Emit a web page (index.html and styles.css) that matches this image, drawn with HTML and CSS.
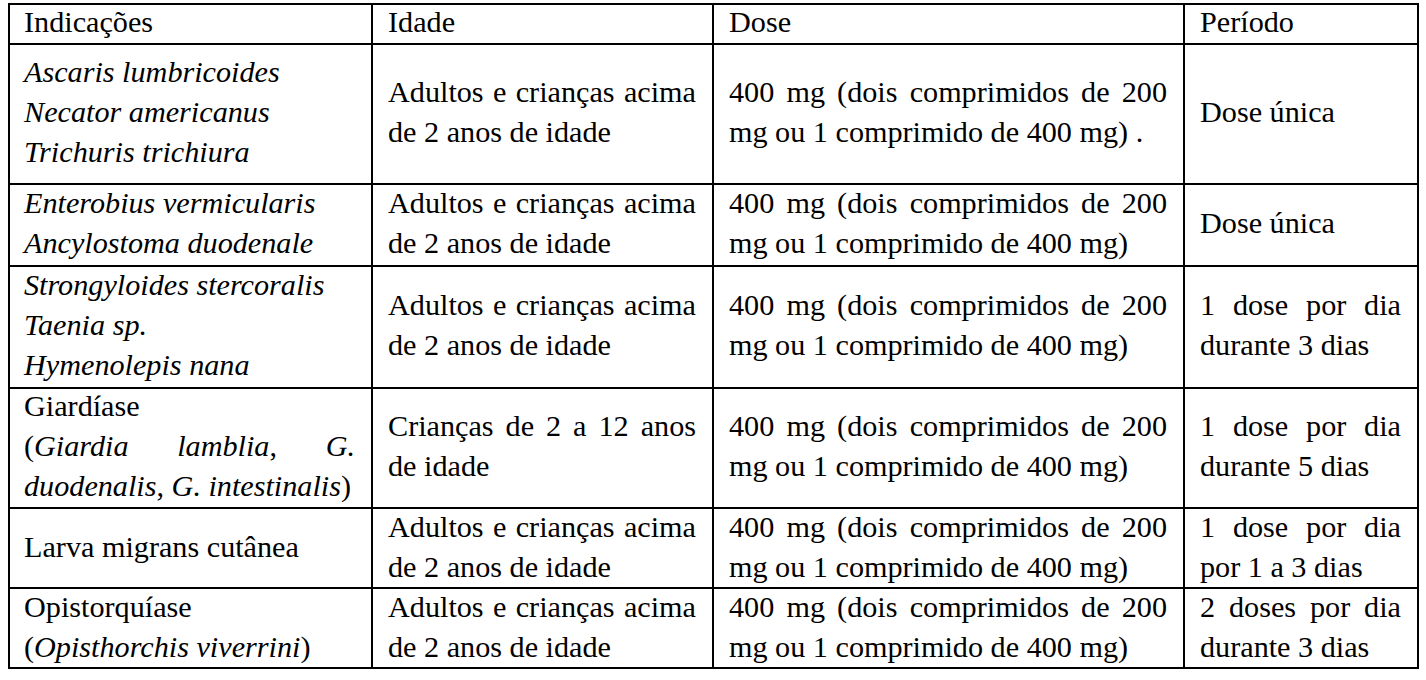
FILE: index.html
```html
<!DOCTYPE html>
<html lang="pt">
<head>
<meta charset="utf-8">
<title>Indicações</title>
<link rel="stylesheet" href="styles.css">
</head>
<body>
<table class="dosage">
  <colgroup>
    <col class="c-ind">
    <col class="c-age">
    <col class="c-dose">
    <col class="c-per">
  </colgroup>
  <tr class="r-head">
    <td><div class="t">Indicações</div></td>
    <td><div class="t">Idade</div></td>
    <td><div class="t">Dose</div></td>
    <td><div class="t">Período</div></td>
  </tr>
  <tr class="r-first">
    <td><div class="t"><i>Ascaris lumbricoides</i><br><i>Necator americanus</i><br><i>Trichuris trichiura</i></div></td>
    <td><div class="t">Adultos e crianças acima de 2 anos de idade</div></td>
    <td><div class="t">400 mg (dois comprimidos de 200 mg ou 1 comprimido de 400 mg) .</div></td>
    <td><div class="t">Dose única</div></td>
  </tr>
  <tr>
    <td><div class="t"><i>Enterobius vermicularis</i><br><i>Ancylostoma duodenale</i></div></td>
    <td><div class="t">Adultos e crianças acima de 2 anos de idade</div></td>
    <td><div class="t">400 mg (dois comprimidos de 200 mg ou 1 comprimido de 400 mg)</div></td>
    <td><div class="t">Dose única</div></td>
  </tr>
  <tr>
    <td><div class="t"><i>Strongyloides stercoralis</i><br><i>Taenia sp.</i><br><i>Hymenolepis nana</i></div></td>
    <td><div class="t">Adultos e crianças acima de 2 anos de idade</div></td>
    <td><div class="t">400 mg (dois comprimidos de 200 mg ou 1 comprimido de 400 mg)</div></td>
    <td><div class="t">1 dose por dia durante 3 dias</div></td>
  </tr>
  <tr class="r-tight">
    <td><div class="t"><div>Giardíase</div><div>(<i>Giardia lamblia</i>, <i>G. duodenalis</i>, <i>G. intestinalis</i>)</div></div></td>
    <td><div class="t">Crianças de 2 a 12 anos de idade</div></td>
    <td><div class="t">400 mg (dois comprimidos de 200 mg ou 1 comprimido de 400 mg)</div></td>
    <td><div class="t">1 dose por dia durante 5 dias</div></td>
  </tr>
  <tr class="r-short">
    <td><div class="t">Larva migrans cutânea</div></td>
    <td><div class="t">Adultos e crianças acima de 2 anos de idade</div></td>
    <td><div class="t">400 mg (dois comprimidos de 200 mg ou 1 comprimido de 400 mg)</div></td>
    <td><div class="t">1 dose por dia por 1 a 3 dias</div></td>
  </tr>
  <tr class="r-short">
    <td><div class="t">Opistorquíase<br>(<i>Opisthorchis viverrini</i>)</div></td>
    <td><div class="t">Adultos e crianças acima de 2 anos de idade</div></td>
    <td><div class="t">400 mg (dois comprimidos de 200 mg ou 1 comprimido de 400 mg)</div></td>
    <td><div class="t">2 doses por dia durante 3 dias</div></td>
  </tr>
</table>
</body>
</html>
```
FILE: styles.css
```css
html, body {
  margin: 0;
  background: #ffffff;
}
body {
  padding: 3px 0 0 8px;
  font-family: "Liberation Serif", "Times New Roman", serif;
  font-size: 30.2px;
  color: #000000;
}
.dosage {
  table-layout: fixed;
  width: 1411px;
  border-collapse: separate;
  border-spacing: 0;
  border-top: 2px solid #000;
  border-left: 2px solid #000;
}
.c-ind { width: 363px; }
.c-age { width: 341px; }
.c-dose { width: 471px; }
.c-per { width: 234px; }
.dosage td {
  border-right: 2px solid #000;
  border-bottom: 2px solid #000;
  padding: 0 16px 0 15px;
  line-height: 40px;
  vertical-align: middle;
  text-align: justify;
}
.dosage td:first-child {
  padding-left: 14px;
}
.t {
  margin: -2px 0 2px;
}
.r-head td {
  line-height: 38px;
}
.r-first td {
  padding-top: 9px;
  padding-bottom: 9px;
}
.r-tight .t {
  margin: -3px 0 1px;
}
.r-short .t {
  margin: -2px 0 0;
}
```
